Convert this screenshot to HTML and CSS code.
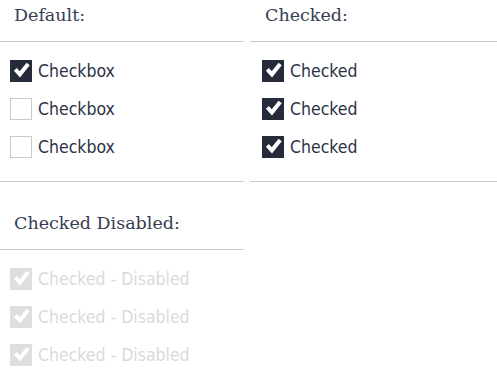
FILE: index.html
```
<!DOCTYPE html>
<html lang="en">
<head>
	<meta charset="UTF-8">
	<title>Checkboxes</title>
	<link rel="stylesheet" href="styles.css">
</head>
<body>
	<div class="grid">
		<div class="panel">
			<h3 class="panel-title">Default:</h3>
			<ul class="list">
				<li class="item"><span class="box checked"><svg viewBox="0 0 22 22"><polygon points="3.2,10.6 6.4,7.6 9.6,11.2 17.2,2 20.6,4.8 9.9,18.2"/></svg></span>Checkbox</li>
				<li class="item"><span class="box"></span>Checkbox</li>
				<li class="item"><span class="box"></span>Checkbox</li>
			</ul>
		</div>
		<div class="panel right">
			<h3 class="panel-title">Checked:</h3>
			<ul class="list">
				<li class="item"><span class="box checked"><svg viewBox="0 0 22 22"><polygon points="3.2,10.6 6.4,7.6 9.6,11.2 17.2,2 20.6,4.8 9.9,18.2"/></svg></span>Checked</li>
				<li class="item"><span class="box checked"><svg viewBox="0 0 22 22"><polygon points="3.2,10.6 6.4,7.6 9.6,11.2 17.2,2 20.6,4.8 9.9,18.2"/></svg></span>Checked</li>
				<li class="item"><span class="box checked"><svg viewBox="0 0 22 22"><polygon points="3.2,10.6 6.4,7.6 9.6,11.2 17.2,2 20.6,4.8 9.9,18.2"/></svg></span>Checked</li>
			</ul>
		</div>
		<div class="panel">
			<h3 class="panel-title">Checked Disabled:</h3>
			<ul class="list">
				<li class="item disabled"><span class="box checked"><svg viewBox="0 0 22 22"><polygon points="3.2,10.6 6.4,7.6 9.6,11.2 17.2,2 20.6,4.8 9.9,18.2"/></svg></span>Checked - Disabled</li>
				<li class="item disabled"><span class="box checked"><svg viewBox="0 0 22 22"><polygon points="3.2,10.6 6.4,7.6 9.6,11.2 17.2,2 20.6,4.8 9.9,18.2"/></svg></span>Checked - Disabled</li>
				<li class="item disabled"><span class="box checked"><svg viewBox="0 0 22 22"><polygon points="3.2,10.6 6.4,7.6 9.6,11.2 17.2,2 20.6,4.8 9.9,18.2"/></svg></span>Checked - Disabled</li>
			</ul>
		</div>
	</div>
</body>
</html>
```

FILE: styles.css
```
*{padding: 0px;margin: 0px;box-sizing: border-box;}
body{background: #fff;}
.grid{display: grid;grid-template-columns: 244px 247px;column-gap: 6px;row-gap: 26px;}
.panel{border-bottom: 1px solid #cbcbcb;}
.panel-title{height: 42px;padding: 5px 0 0 14px;border-bottom: 1px solid #cbcbcb;font-family: "DejaVu Serif", Georgia, serif;font-weight: normal;font-size: 17.5px;line-height: 20px;color: #363c52;}
.list{list-style: none;display: flex;flex-direction: column;gap: 16px;padding: 18px 0 23px 10px;}
.right .panel-title{padding-left: 15px;}
.right .list{padding-left: 12px;}
.item{display: flex;align-items: center;gap: 6px;font-family: "DejaVu Sans Condensed", "DejaVu Sans", sans-serif;font-size: 17.5px;line-height: 22px;color: #2b3245;}
.box{width: 22px;height: 22px;border: 1px solid #c9c9c9;background: #fff;display: block;}
.box.checked{background: #252b39;border-color: #252b39;}
.box svg{display: block;width: 20px;height: 20px;fill: #fff;}
.disabled{color: #dadada;}
.disabled .box.checked{background: #dedede;border-color: #dedede;}
```
